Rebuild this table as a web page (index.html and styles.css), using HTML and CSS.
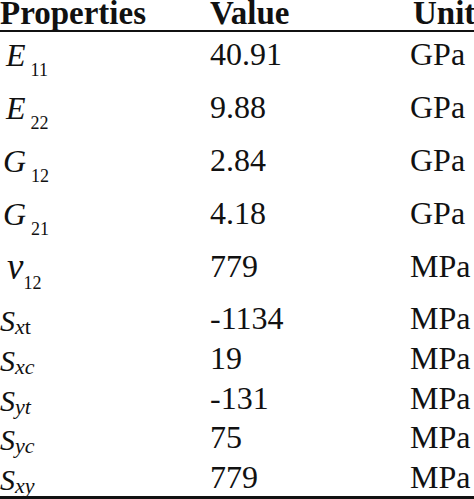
FILE: index.html
```html
<!DOCTYPE html>
<html>
<head>
<meta charset="utf-8">
<link rel="stylesheet" href="styles.css">
</head>
<body>
<div class="table">
  <div class="row head">
    <div class="c1">Properties</div><div class="c2">Value</div><div class="c3 unit-h">Unit</div>
  </div>
  <div class="row tall">
    <div class="c1 lab-e"><span class="sym">E</span><span class="sub num">11</span></div>
    <div class="c2">40.91</div><div class="c3">GPa</div>
  </div>
  <div class="row tall">
    <div class="c1 lab-e"><span class="sym">E</span><span class="sub num">22</span></div>
    <div class="c2">9.88</div><div class="c3">GPa</div>
  </div>
  <div class="row tall">
    <div class="c1 lab-g"><span class="sym">G</span><span class="sub num">12</span></div>
    <div class="c2">2.84</div><div class="c3">GPa</div>
  </div>
  <div class="row tall">
    <div class="c1 lab-g"><span class="sym">G</span><span class="sub num">21</span></div>
    <div class="c2">4.18</div><div class="c3">GPa</div>
  </div>
  <div class="row tall">
    <div class="c1 lab-nu"><span class="sym nu">ν</span><span class="sub num nu-sub">12</span></div>
    <div class="c2">779</div><div class="c3">MPa</div>
  </div>
  <div class="row short">
    <div class="c1 lab-s"><span class="sym s">S</span><span class="sub s-sub">x<span class="up">t</span></span></div>
    <div class="c2">-1134</div><div class="c3">MPa</div>
  </div>
  <div class="row short">
    <div class="c1 lab-s"><span class="sym s">S</span><span class="sub s-sub">xc</span></div>
    <div class="c2">19</div><div class="c3">MPa</div>
  </div>
  <div class="row short">
    <div class="c1 lab-s"><span class="sym s">S</span><span class="sub s-sub">yt</span></div>
    <div class="c2">-131</div><div class="c3">MPa</div>
  </div>
  <div class="row short">
    <div class="c1 lab-s"><span class="sym s">S</span><span class="sub s-sub">yc</span></div>
    <div class="c2">75</div><div class="c3">MPa</div>
  </div>
  <div class="row short">
    <div class="c1 lab-s"><span class="sym s">S</span><span class="sub s-sub">xy</span></div>
    <div class="c2">779</div><div class="c3">MPa</div>
  </div>
</div>
</body>
</html>
```
FILE: styles.css
```css
html, body {
  margin: 0;
  padding: 0;
  background: #fff;
  overflow: hidden;
}

body {
  font-family: "Liberation Serif", "Times New Roman", serif;
  color: #111;
}

.table {
  width: 474px;
  border-bottom: 3px solid #111;
}

.row {
  display: grid;
  grid-template-columns: 210px 200px 64px;
  font-size: 32px;
  white-space: nowrap;
}

.head {
  height: 30px;
  line-height: 26px;
  font-size: 33px;
  font-weight: bold;
  border-bottom: 2px solid #111;
}

.unit-h {
  padding-left: 3px;
}

.tall {
  height: 53px;
  line-height: 44.4px;
}

.short {
  height: 39.8px;
  line-height: 42.4px;
}

.sym {
  font-style: italic;
  vertical-align: -1px;
}

.sub {
  line-height: 0;
}

.num {
  font-size: 18px;
  vertical-align: -11px;
  margin-left: 5px;
}

.lab-e {
  padding-left: 6px;
}

.lab-g {
  padding-left: 3px;
}

.lab-nu {
  padding-left: 7px;
}

.nu {
  font-size: 37px;
  vertical-align: -2px;
  line-height: 0;
}

.nu-sub {
  margin-left: 0;
  vertical-align: -12px;
}

.lab-s {
  padding-left: 0;
}

.s {
  font-size: 30px;
  vertical-align: -2px;
}

.s-sub {
  font-size: 22px;
  font-style: italic;
  vertical-align: -5px;
}

.up {
  font-style: normal;
}
```
